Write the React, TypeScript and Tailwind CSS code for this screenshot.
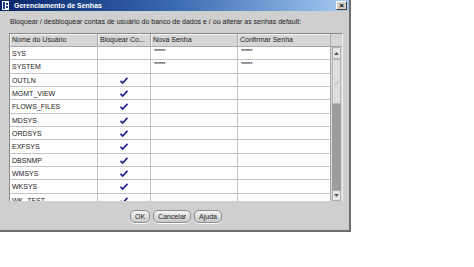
import React from 'react';

const USERS: { name: string; locked: boolean; pwd: boolean }[] = [
  { name: 'SYS', locked: false, pwd: true },
  { name: 'SYSTEM', locked: false, pwd: true },
  { name: 'OUTLN', locked: true, pwd: false },
  { name: 'MGMT_VIEW', locked: true, pwd: false },
  { name: 'FLOWS_FILES', locked: true, pwd: false },
  { name: 'MDSYS', locked: true, pwd: false },
  { name: 'ORDSYS', locked: true, pwd: false },
  { name: 'EXFSYS', locked: true, pwd: false },
  { name: 'DBSNMP', locked: true, pwd: false },
  { name: 'WMSYS', locked: true, pwd: false },
  { name: 'WKSYS', locked: true, pwd: false },
  { name: 'WK_TEST', locked: true, pwd: false },
];

const COLS = 'grid grid-cols-[88px_53px_87px_92px]';

const Check = () => (
  <svg width="8" height="7" viewBox="0 0 8 7">
    <path d="M0.5 3.8 L2.6 6 L7.5 0.8" fill="none" stroke="#1c1c8f" strokeWidth="1.7" />
  </svg>
);

const Btn = ({ label }: { label: string }) => (
  <button className="h-[13px] px-[4px] rounded-[5px] border border-[#8c8c8c] bg-gradient-to-b from-[#f4f4f4] to-[#c8c8c8] text-[7px] leading-[11px] text-[#222] shadow-[0_1px_0_#ffffff]">
    {label}
  </button>
);

export default function App() {
  return (
    <div className="w-[474px] h-[267px] bg-white overflow-hidden" style={{ fontFamily: '"Liberation Sans", Arial, sans-serif' }}>
      <div className="w-[351px] h-[232px] bg-[#cfcfcf] border-r-2 border-b-2 border-[#6e6e6e] flex flex-col">
        {/* barra de título */}
        <div className="h-[11px] flex items-center bg-gradient-to-r from-[#0a246a] via-[#3a6ab0] to-[#a6caf0] pl-[2px] pr-[2px]">
          <svg width="7" height="9" viewBox="0 0 7 9" className="shrink-0">
            <rect x="0" y="0" width="7" height="9" fill="#ffffff" />
            <rect x="1" y="1" width="2" height="7" fill="#1d3f8a" />
            <rect x="4" y="2" width="2" height="2" fill="#1d3f8a" />
            <rect x="4" y="5" width="2" height="2" fill="#1d3f8a" />
          </svg>
          <span className="ml-[5px] text-[7px] font-bold text-white leading-none">Gerenciamento de Senhas</span>
          <div className="ml-auto w-[11px] h-[9px] bg-[#d4d0c8] border border-t-white border-l-white border-r-[#404040] border-b-[#404040] flex items-center justify-center text-[8px] font-bold leading-none text-black">
            ×
          </div>
        </div>

        <div className="pl-[10px] mt-[6px] h-[9px] text-[7px] leading-[9px] text-[#1a1a1a]">
          Bloquear / desbloquear contas de usuário do banco de dados e / ou alterar as senhas default:
        </div>

        {/* tabela */}
        <div className="ml-[9px] mt-[7px] w-[334px] h-[168px] flex border-l border-t border-[#8a8a8a] border-r border-r-[#eeeeee] bg-white">
          <div className="w-[320px] flex flex-col">
            <div className={`${COLS} h-[13px] bg-[#d6d6d6] border-b border-[#a8a8a8] text-[7px] leading-[12px] text-[#1a1a1a]`}>
              <div className="pl-[2px] border-r border-[#a8a8a8] shadow-[inset_1px_1px_0_#f4f4f4]">Nome do Usuário</div>
              <div className="pl-[2px] border-r border-[#a8a8a8] shadow-[inset_1px_1px_0_#f4f4f4] whitespace-nowrap overflow-hidden">Bloquear Co...</div>
              <div className="pl-[2px] border-r border-[#a8a8a8] shadow-[inset_1px_1px_0_#f4f4f4]">Nova Senha</div>
              <div className="pl-[2px] shadow-[inset_1px_1px_0_#f4f4f4]">Confirmar Senha</div>
            </div>
            <div className="h-[154px] overflow-hidden">
              {USERS.map((u) => (
                <div key={u.name} className={`${COLS} h-[13.33px] border-b border-[#c4c4c4] text-[7px] leading-[13px] text-[#1a1a1a]`}>
                  <div className="pl-[2px] border-r border-[#c4c4c4]">{u.name}</div>
                  <div className="border-r border-[#c4c4c4] flex items-center justify-center">{u.locked && <Check />}</div>
                  <div className="pl-[3px] border-r border-[#c4c4c4] text-[6px] leading-[9px] tracking-[-0.5px]">{u.pwd ? '******' : ''}</div>
                  <div className="pl-[3px] text-[6px] leading-[9px] tracking-[-0.5px]">{u.pwd ? '******' : ''}</div>
                </div>
              ))}
            </div>
          </div>
          {/* barra de rolagem */}
          <div className="w-[13px] flex flex-col border-l border-[#a8a8a8] bg-[#d6d6d6]">
            <div className="h-[13px] border-b border-[#a8a8a8]" />
            <div className="mx-[1px] h-[12px] bg-[#e6e6e6] border border-[#b0b0b0] flex items-center justify-center">
              <svg width="5" height="3" viewBox="0 0 5 3"><path d="M0 3 L2.5 0 L5 3 Z" fill="#555" /></svg>
            </div>
            <div className="mx-[1px] h-[45px] bg-[#dedede] border border-[#b8b8b8] flex items-center justify-center">
              <svg width="6" height="8" viewBox="0 0 6 8"><path d="M1 6 L5 2 M1 8 L5 4" stroke="#b4b4b4" strokeWidth="0.8" /></svg>
            </div>
            <div className="mx-[1px] flex-1 bg-[#9c9c9c]" />
            <div className="mx-[1px] h-[11px] bg-[#e6e6e6] border border-[#b0b0b0] flex items-center justify-center">
              <svg width="5" height="3" viewBox="0 0 5 3"><path d="M0 0 L2.5 3 L5 0 Z" fill="#555" /></svg>
            </div>
          </div>
        </div>

        <div className="mt-[9px] flex justify-center gap-[3px] pl-[3px]">
          <Btn label="OK" />
          <Btn label="Cancelar" />
          <Btn label="Ajuda" />
        </div>
      </div>
    </div>
  );
}
